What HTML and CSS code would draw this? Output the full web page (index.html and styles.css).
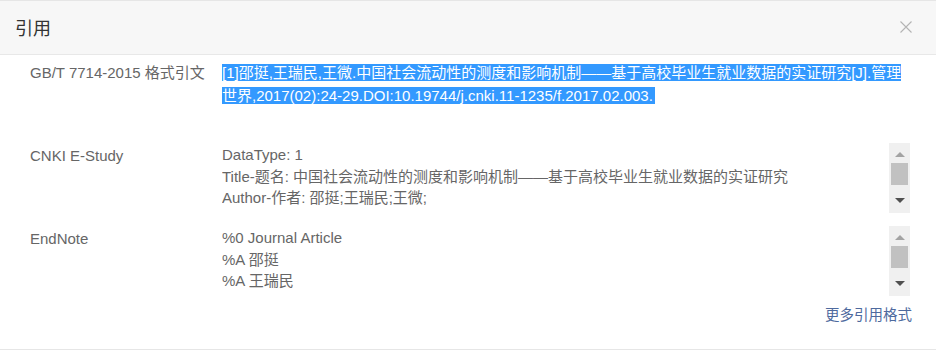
FILE: index.html
```html
<!DOCTYPE html>
<html lang="zh-CN">
<head>
<meta charset="utf-8">
<title>引用</title>
<link rel="stylesheet" href="styles.css">
</head>
<body>
<div class="dialog">
  <div class="header">
    <span class="title">引用</span>
    <span class="close">
      <svg width="12" height="12" viewBox="0 0 12 12"><path d="M0.5 0.5L11.5 11.5M11.5 0.5L0.5 11.5" stroke="#b4b4b4" stroke-width="1.1" fill="none"/></svg>
    </span>
  </div>
  <div class="body">
    <div class="row row-gb">
      <div class="label">GB/T 7714-2015 格式引文</div>
      <div class="content gb"><span class="sel">[1]邵挺,王瑞民,王微.中国社会流动性的测度和影响机制——基于高校毕业生就业数据的实证研究[J].管理世界,2017(02):24-29.DOI:10.19744/j.cnki.11-1235/f.2017.02.003.</span></div>
    </div>
    <div class="row row-es">
      <div class="label lab2">CNKI E-Study</div>
      <div class="box">
        <div class="box-text">
          <div>DataType: 1</div>
          <div>Title-题名: 中国社会流动性的测度和影响机制——基于高校毕业生就业数据的实证研究</div>
          <div>Author-作者: 邵挺;王瑞民;王微;</div>
        </div>
        <div class="sbar">
          <span class="arr up"></span>
          <span class="thumb"></span>
          <span class="arr down"></span>
        </div>
      </div>
    </div>
    <div class="row row-en">
      <div class="label lab2">EndNote</div>
      <div class="box">
        <div class="box-text">
          <div>%0 Journal Article</div>
          <div>%A 邵挺</div>
          <div>%A 王瑞民</div>
        </div>
        <div class="sbar">
          <span class="arr up"></span>
          <span class="thumb"></span>
          <span class="arr down"></span>
        </div>
      </div>
    </div>
    <div class="more"><a class="more-link" href="#">更多引用格式</a></div>
  </div>
</div>
</body>
</html>
```
FILE: styles.css
```css
* { box-sizing: border-box; }
html, body { margin: 0; padding: 0; background: #fff; }
body {
  width: 936px;
  height: 351px;
  overflow: hidden;
  font-family: "Liberation Sans", Arial, "Noto Sans CJK SC", sans-serif;
  color: #666;
}
.dialog {
  border-top: 1px solid #e6e6e6;
  border-bottom: 1px solid #e6e6e6;
  height: 350px;
  display: flex;
  flex-direction: column;
}
.header {
  height: 54px;
  background: #f7f7f7;
  border-bottom: 1px solid #e8e8e8;
  display: flex;
  align-items: center;
  justify-content: space-between;
  padding: 0 24px 0 15px;
}
.title {
  font-family: "Noto Sans CJK SC", sans-serif;
  font-size: 18px;
  color: #333;
  font-weight: 400;
  padding-bottom: 1px;
}
.close { display: flex; width: 12px; height: 12px; margin-bottom: 1px; }
.body {
  flex: 1;
  padding: 6px 24px 0 30px;
  display: flex;
  flex-direction: column;
}
.row {
  display: grid;
  grid-template-columns: 192px 1fr;
}
.label {
  font-size: 15px;
  line-height: 23px;
  color: #666;
  white-space: nowrap;
}
.lab2 { line-height: 21px; padding-top: 2px; }
.gb {
  font-size: 15px;
  line-height: 23px;
  padding-right: 2px;
}
.sel {
  background: #3399ff;
  color: #fff;
  padding-right: 2px;
}
.row-es { margin-top: 36px; }
.row-en { margin-top: 13px; }
.box {
  height: 70px;
  display: flex;
  margin-right: 2px;
}
.box-text {
  flex: 1;
  overflow: hidden;
  font-size: 15px;
  line-height: 21.5px;
  padding-top: 1px;
  color: #666;
  white-space: nowrap;
}
.sbar {
  width: 21px;
  background: #f0f0f0;
  display: flex;
  flex-direction: column;
  align-items: center;
  padding-top: 9px;
}
.arr {
  width: 0;
  height: 0;
  border-left: 5px solid transparent;
  border-right: 5px solid transparent;
}
.arr.up { border-bottom: 5px solid #a3a3a3; }
.thumb {
  width: 17px;
  height: 22px;
  background: #c1c1c1;
  margin-top: 6px;
}
.arr.down { border-top: 5px solid #505050; margin-top: 13px; }
.more {
  display: flex;
  justify-content: flex-end;
  margin-top: 8px;
}
.more-link {
  font-family: "Noto Sans CJK SC", sans-serif;
  font-size: 14.5px;
  line-height: 20px;
  color: #4e6a9e;
  text-decoration: none;
}
```
